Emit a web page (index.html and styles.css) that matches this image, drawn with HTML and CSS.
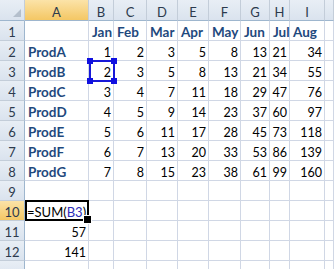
FILE: index.html
```html
<!DOCTYPE html>
<html>
<head>
<meta charset="utf-8">
<link rel="stylesheet" href="styles.css">
</head>
<body>
<div class="sheet">
  <div class="row colhead">
    <div class="c h corner"></div>
    <div class="c h sel">A</div>
    <div class="c h">B</div>
    <div class="c h">C</div>
    <div class="c h">D</div>
    <div class="c h">E</div>
    <div class="c h">F</div>
    <div class="c h">G</div>
    <div class="c h">H</div>
    <div class="c h">I</div>
    <div class="c h"></div>
  </div>
  <div class="row">
    <div class="c h rh">1</div>
    <div class="c"></div>
    <div class="c t">Jan</div>
    <div class="c t">Feb</div>
    <div class="c t">Mar</div>
    <div class="c t">Apr</div>
    <div class="c t">May</div>
    <div class="c t">Jun</div>
    <div class="c t">Jul</div>
    <div class="c t">Aug</div>
    <div class="c"></div>
  </div>
  <div class="row">
    <div class="c h rh">2</div>
    <div class="c t">ProdA</div>
    <div class="c n">1</div>
    <div class="c n">2</div>
    <div class="c n">3</div>
    <div class="c n">5</div>
    <div class="c n">8</div>
    <div class="c n">13</div>
    <div class="c n">21</div>
    <div class="c n">34</div>
    <div class="c"></div>
  </div>
  <div class="row">
    <div class="c h rh">3</div>
    <div class="c t">ProdB</div>
    <div class="c n ref">2<span class="refbox"><span class="knob k1"></span><span class="knob k2"></span><span class="knob k3"></span><span class="knob k4"></span></span></div>
    <div class="c n">3</div>
    <div class="c n">5</div>
    <div class="c n">8</div>
    <div class="c n">13</div>
    <div class="c n">21</div>
    <div class="c n">34</div>
    <div class="c n">55</div>
    <div class="c"></div>
  </div>
  <div class="row">
    <div class="c h rh">4</div>
    <div class="c t">ProdC</div>
    <div class="c n">3</div>
    <div class="c n">4</div>
    <div class="c n">7</div>
    <div class="c n">11</div>
    <div class="c n">18</div>
    <div class="c n">29</div>
    <div class="c n">47</div>
    <div class="c n">76</div>
    <div class="c"></div>
  </div>
  <div class="row">
    <div class="c h rh">5</div>
    <div class="c t">ProdD</div>
    <div class="c n">4</div>
    <div class="c n">5</div>
    <div class="c n">9</div>
    <div class="c n">14</div>
    <div class="c n">23</div>
    <div class="c n">37</div>
    <div class="c n">60</div>
    <div class="c n">97</div>
    <div class="c"></div>
  </div>
  <div class="row">
    <div class="c h rh">6</div>
    <div class="c t">ProdE</div>
    <div class="c n">5</div>
    <div class="c n">6</div>
    <div class="c n">11</div>
    <div class="c n">17</div>
    <div class="c n">28</div>
    <div class="c n">45</div>
    <div class="c n">73</div>
    <div class="c n">118</div>
    <div class="c"></div>
  </div>
  <div class="row">
    <div class="c h rh">7</div>
    <div class="c t">ProdF</div>
    <div class="c n">6</div>
    <div class="c n">7</div>
    <div class="c n">13</div>
    <div class="c n">20</div>
    <div class="c n">33</div>
    <div class="c n">53</div>
    <div class="c n">86</div>
    <div class="c n">139</div>
    <div class="c"></div>
  </div>
  <div class="row">
    <div class="c h rh">8</div>
    <div class="c t">ProdG</div>
    <div class="c n">7</div>
    <div class="c n">8</div>
    <div class="c n">15</div>
    <div class="c n">23</div>
    <div class="c n">38</div>
    <div class="c n">61</div>
    <div class="c n">99</div>
    <div class="c n">160</div>
    <div class="c"></div>
  </div>
  <div class="row">
    <div class="c h rh">9</div>
    <div class="c"></div><div class="c"></div><div class="c"></div><div class="c"></div><div class="c"></div>
    <div class="c"></div><div class="c"></div><div class="c"></div><div class="c"></div><div class="c"></div>
  </div>
  <div class="row">
    <div class="c h rh sel">10</div>
    <div class="c active">=SUM(<span class="refcol">B3</span>)</div>
    <div class="c"></div><div class="c"></div><div class="c"></div><div class="c"></div><div class="c"></div>
    <div class="c"></div><div class="c"></div><div class="c"></div><div class="c"></div>
  </div>
  <div class="row">
    <div class="c h rh">11</div>
    <div class="c n">57</div>
    <div class="c"></div><div class="c"></div><div class="c"></div><div class="c"></div><div class="c"></div>
    <div class="c"></div><div class="c"></div><div class="c"></div><div class="c"></div>
  </div>
  <div class="row">
    <div class="c h rh">12</div>
    <div class="c n">141</div>
    <div class="c"></div><div class="c"></div><div class="c"></div><div class="c"></div><div class="c"></div>
    <div class="c"></div><div class="c"></div><div class="c"></div><div class="c"></div>
  </div>
  <div class="row">
    <div class="c h rh"></div>
    <div class="c"></div><div class="c"></div><div class="c"></div><div class="c"></div><div class="c"></div>
    <div class="c"></div><div class="c"></div><div class="c"></div><div class="c"></div><div class="c"></div>
  </div>
</div>
</body>
</html>
```
FILE: styles.css
```css
* { box-sizing: border-box; margin: 0; padding: 0; }
html, body { background: #fff; }
body {
  margin: 0;
  width: 334px;
  height: 269px;
  overflow: hidden;
  font-family: Lato, "Open Sans", sans-serif;
  font-size: 13px;
  color: #000;
}
.sheet { display: flex; flex-direction: column; width: 334px; }
.row {
  display: grid;
  grid-template-columns: 25px 64px 25px 33px 31px 31px 32px 29px 20px 35px 9px;
  height: 20px;
  flex: none;
}
.row.colhead { height: 21px; }
.c {
  position: relative;
  display: flex;
  align-items: flex-end;
  padding: 0 3px;
  line-height: 15px;
  white-space: nowrap;
  min-width: 0;
  border-right: 1px solid #d0d7e5;
  border-bottom: 1px solid #d0d7e5;
}
.n { justify-content: flex-end; font-size: 12.5px; padding-right: 2px; }
.t { font-weight: 700; font-size: 13.5px; color: #1f497d; }
.refcol { color: #2b2bb8; }
.h {
  justify-content: center;
  padding: 0;
  font-size: 13px;
  color: #2c3a4d;
  background: linear-gradient(#e8eef5, #dae3ee);
  border-right: 1px solid #c3cdd9;
  border-bottom: 1px solid #9eb6ce;
}
.rh {
  border-right: 1px solid #9eb6ce;
  border-bottom: 1px solid #c3cdd9;
}
.sel { background: linear-gradient(#fbe3a8, #f4c764); }
.corner::after {
  content: "";
  position: absolute;
  right: 3px;
  bottom: 3px;
  width: 0;
  height: 0;
  border-style: solid;
  border-width: 0 0 8px 8px;
  border-color: transparent transparent #b4bfcc transparent;
}
.active { z-index: 3; padding-left: 2px; }
.active::after {
  content: "";
  position: absolute;
  left: 0;
  top: -1px;
  right: -1px;
  bottom: -1px;
  border: 2px solid #000;
}
.active::before {
  content: "";
  position: absolute;
  right: -4px;
  bottom: -4px;
  width: 7px;
  height: 7px;
  background: #000;
  border: 1px solid #fff;
  z-index: 2;
}
.ref { z-index: 3; }
.refbox {
  position: absolute;
  left: 0;
  top: -1px;
  right: -2px;
  bottom: -2px;
  border: 2px solid #1818d8;
}
.knob {
  position: absolute;
  width: 6px;
  height: 6px;
  background: #1010e0;
}
.k1 { left: -4px; top: -4px; }
.k2 { right: -4px; top: -4px; }
.k3 { left: -4px; bottom: -4px; }
.k4 { right: -4px; bottom: -4px; }
```
